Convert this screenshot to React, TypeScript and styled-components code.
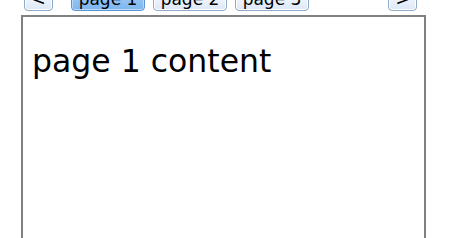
import { FC } from 'react'
import styled, { createGlobalStyle } from 'styled-components'

const GlobalStyle = createGlobalStyle`
    body {
        margin: 0;
        background: #fff;
        font-family: "DejaVu Sans", "Liberation Sans", sans-serif;
        overflow: hidden;
    }
    * {
        box-sizing: border-box;
    }
`

const Wrapper = styled.div`
    width: 454px;
    height: 238px;
    overflow: hidden;
`

const Toolbar = styled.div`
    display: flex;
    align-items: flex-end;
    gap: 8px;
    height: 24px;
    margin-top: -13px;
    padding-left: 24px;
    width: 417px;
`

const NavButton = styled.button<{ $active?: boolean; $wide?: boolean; $push?: boolean }>`
    height: 24px;
    width: ${p => (p.$wide ? '74px' : '29px')};
    padding: 0;
    margin-left: ${p => (p.$push ? 'auto' : '0')};
    border-radius: 4px;
    border: 1px solid ${p => (p.$active ? '#5e94d0' : '#8fa9c8')};
    background: ${p =>
        p.$active
            ? 'linear-gradient(#a8d0f6, #7fb6ee)'
            : 'linear-gradient(#ffffff, #dce8f6)'};
    box-shadow: inset 0 0 0 1px ${p => (p.$active ? '#b9dafa' : '#ffffff')};
    font-family: inherit;
    font-size: 17px;
    color: #000;
`

const Spacer = styled.span`
    width: 2px;
`

const Panel = styled.div`
    margin: 4px 0 0 21px;
    width: 405px;
    height: 260px;
    border: 2px solid #808080;
    padding: 26px 9px;
`

const Content = styled.div`
    font-size: 31.5px;
    color: #000;
`

const App: FC = () => {
    return (
        <Wrapper>
            <GlobalStyle />
            <Toolbar>
                <NavButton>&lt;</NavButton>
                <Spacer />
                <NavButton $active $wide>page 1</NavButton>
                <NavButton $wide>page 2</NavButton>
                <NavButton $wide>page 3</NavButton>
                <NavButton $push>&gt;</NavButton>
            </Toolbar>
            <Panel>
                <Content>page 1 content</Content>
            </Panel>
        </Wrapper>
    )
}

export default App
